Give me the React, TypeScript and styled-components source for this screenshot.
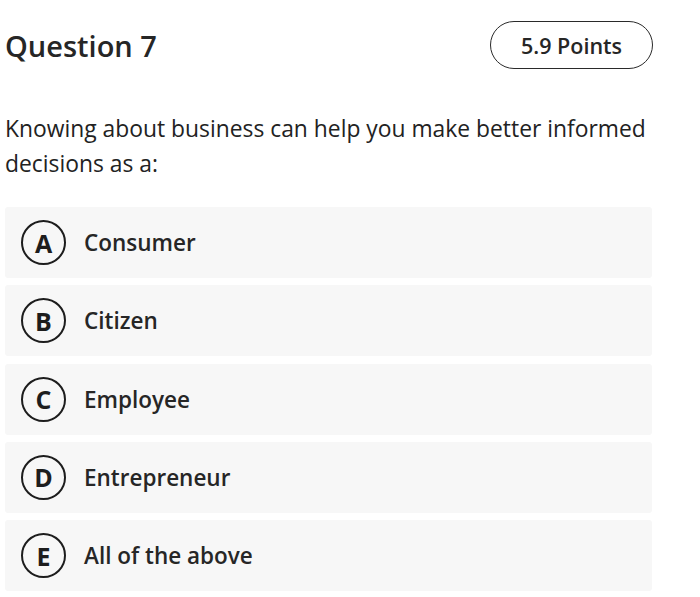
import React from "react";
import styled, { createGlobalStyle } from "styled-components";

const Global = createGlobalStyle`
  html, body { margin: 0; padding: 0; background: #ffffff; }
  body { font-family: "Open Sans", "Noto Sans", sans-serif; color: #222222; }
`;

const Page = styled.div`
  width: 647px;
  padding: 21px 0 0 5px;
  display: flex;
  flex-direction: column;
`;

const Header = styled.header`
  display: flex;
  align-items: center;
  justify-content: space-between;
  height: 48px;
`;

const Title = styled.h1`
  margin: 0;
  font-size: 29px;
  font-weight: 600;
  color: #262626;
`;

const Pill = styled.div`
  box-sizing: border-box;
  width: 163px;
  height: 48px;
  margin-right: -1px;
  border: 1.5px solid #2a2a2a;
  border-radius: 24px;
  display: flex;
  align-items: center;
  justify-content: center;
  font-size: 21.5px;
  font-weight: 600;
  color: #262626;
`;

const Prompt = styled.p`
  margin: 42px 0 0 0;
  font-size: 22.85px;
  line-height: 35px;
  color: #222222;
`;

const Options = styled.div`
  margin-top: 26px;
  display: flex;
  flex-direction: column;
  gap: 7.25px;
`;

const Option = styled.div`
  height: 71px;
  background: #f7f7f7;
  border-radius: 3px;
  display: flex;
  align-items: center;
  padding-left: 16px;
  gap: 18px;
`;

const Letter = styled.span`
  box-sizing: border-box;
  width: 45px;
  height: 45px;
  border: 2.5px solid #1d1d1d;
  border-radius: 50%;
  display: flex;
  align-items: center;
  justify-content: center;
  font-size: 25px;
  font-weight: 700;
  color: #1d1d1d;
`;

const Label = styled.span`
  font-size: 22.5px;
  font-weight: 600;
  color: #262626;
`;

const choices = [
  { key: "A", text: "Consumer" },
  { key: "B", text: "Citizen" },
  { key: "C", text: "Employee" },
  { key: "D", text: "Entrepreneur" },
  { key: "E", text: "All of the above" },
];

export default function App() {
  return (
    <>
      <Global />
      <Page>
        <Header>
          <Title>Question 7</Title>
          <Pill>5.9 Points</Pill>
        </Header>
        <Prompt>
          Knowing about business can help you make better informed decisions as a:
        </Prompt>
        <Options>
          {choices.map((c) => (
            <Option key={c.key}>
              <Letter>{c.key}</Letter>
              <Label>{c.text}</Label>
            </Option>
          ))}
        </Options>
      </Page>
    </>
  );
}
